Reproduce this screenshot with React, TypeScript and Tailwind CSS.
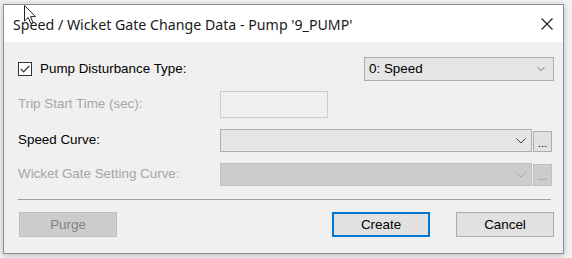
import React from "react";

const Chevron = ({ color = "#606060", w = 10 }: { color?: string; w?: number }) => (
  <svg width={w} height={6} viewBox="0 0 10 6" fill="none">
    <path d="M0.5 0.5 L5 5 L9.5 0.5" stroke={color} strokeWidth="1" />
  </svg>
);

export default function App() {
  const sans = { fontFamily: '"Liberation Sans", Arial, sans-serif' };
  return (
    <div className="relative w-[572px] h-[258px] bg-[#f2f2f2] overflow-hidden pl-[3px] pt-[4px]">
      <div className="w-[561px] h-[250px] border border-[#8e8e8e] bg-[#f0f0f0] flex flex-col shadow-[0_1px_6px_rgba(0,0,0,0.25)]">
        {/* title bar */}
        <div className="h-[37px] bg-white flex items-center pl-[9px] pr-[10px] shrink-0">
          <span
            className="text-[14.2px] text-[#1a1a1a] pt-[2px]"
            style={{ fontFamily: '"Noto Sans", "Open Sans", sans-serif' }}
          >
            Speed / Wicket Gate Change Data - Pump '9_PUMP'
          </span>
          <div className="ml-auto flex items-center pt-[1px]">
            <svg width="12" height="12" viewBox="0 0 12 12">
              <path d="M0.5 0.5 L11.5 11.5 M11.5 0.5 L0.5 11.5" stroke="#1a1a1a" strokeWidth="1.1" />
            </svg>
          </div>
        </div>
        {/* body */}
        <div className="flex flex-col pl-[14px] pr-[9px] text-[13.4px] text-black" style={sans}>
          {/* row 1 */}
          <div className="mt-[15px] h-[24px] flex items-center">
            <div className="w-[14px] h-[14px] border border-[#333] bg-white flex items-center justify-center">
              <svg width="10" height="8" viewBox="0 0 10 8" fill="none">
                <path d="M0.8 4 L3.6 6.8 L9.2 1" stroke="#333" strokeWidth="1.2" />
              </svg>
            </div>
            <span className="ml-[8px]">Pump Disturbance Type:</span>
            <div className="ml-auto w-[190px] h-[24px] border border-[#acacac] bg-[#e5e5e5] flex items-center pl-[4px] pr-[8px]">
              <span>0: Speed</span>
              <span className="ml-auto flex">
                <Chevron w={8} />
              </span>
            </div>
          </div>
          {/* row 2 */}
          <div className="mt-[10px] h-[27px] flex items-center">
            <span className="w-[202px] text-[#a6a6a6]">Trip Start Time (sec):</span>
            <div className="w-[108px] h-[27px] border border-[#cccccc] bg-[#f0f0f0]" />
          </div>
          {/* row 3 */}
          <div className="mt-[11px] h-[23px] flex items-center">
            <span className="w-[202px]">Speed Curve:</span>
            <div className="w-[312px] h-[23px] border border-[#adadad] bg-[#e5e5e5] flex items-center justify-end pr-[5px]">
              <Chevron color="#404040" />
            </div>
            <div className="ml-[1px] w-[19px] h-[21px] self-end border border-[#adadad] bg-[#e1e1e1] flex items-center justify-center text-[11px] leading-none pt-[3px]">
              ...
            </div>
          </div>
          {/* row 4 */}
          <div className="mt-[11px] h-[23px] flex items-center">
            <span className="w-[202px] text-[#a6a6a6]">Wicket Gate Setting Curve:</span>
            <div className="w-[312px] h-[23px] border border-[#bfbfbf] bg-[#cccccc] flex items-center justify-end pr-[5px]">
              <Chevron color="#a8a8a8" />
            </div>
            <div className="ml-[1px] w-[19px] h-[22px] self-end border border-[#bfbfbf] bg-[#cccccc] flex items-center justify-center text-[11px] leading-none pt-[3px] text-[#8a8a8a]">
              ...
            </div>
          </div>
          {/* separator */}
          <div className="mt-[13px] h-[1px] w-[533px] bg-[#a0a0a0]" />
          {/* buttons */}
          <div className="mt-[12px] h-[25px] flex items-center pl-[1px]">
            <div className="w-[98px] h-[25px] border border-[#bfbfbf] bg-[#cccccc] flex items-center justify-center pt-[1px] text-[#838383]">
              Purge
            </div>
            <div className="ml-auto w-[98px] h-[25px] border-2 border-[#0078d7] bg-[#e1e1e1] flex items-center justify-center pt-[1px]">
              Create
            </div>
            <div className="ml-[26px] w-[98px] h-[25px] border border-[#adadad] bg-[#e1e1e1] flex items-center justify-center pt-[1px]">
              Cancel
            </div>
          </div>
        </div>
      </div>
      {/* mouse cursor */}
      <svg className="absolute left-[24px] top-[5px]" width="13" height="20" viewBox="0 0 13 20">
        <path d="M0.5 0.5 L0.5 16 L4.2 12.4 L6.8 18.5 L9 17.6 L6.5 11.6 L11.5 11.6 Z" fill="white" stroke="#222" strokeWidth="1" strokeLinejoin="round" />
      </svg>
    </div>
  );
}
